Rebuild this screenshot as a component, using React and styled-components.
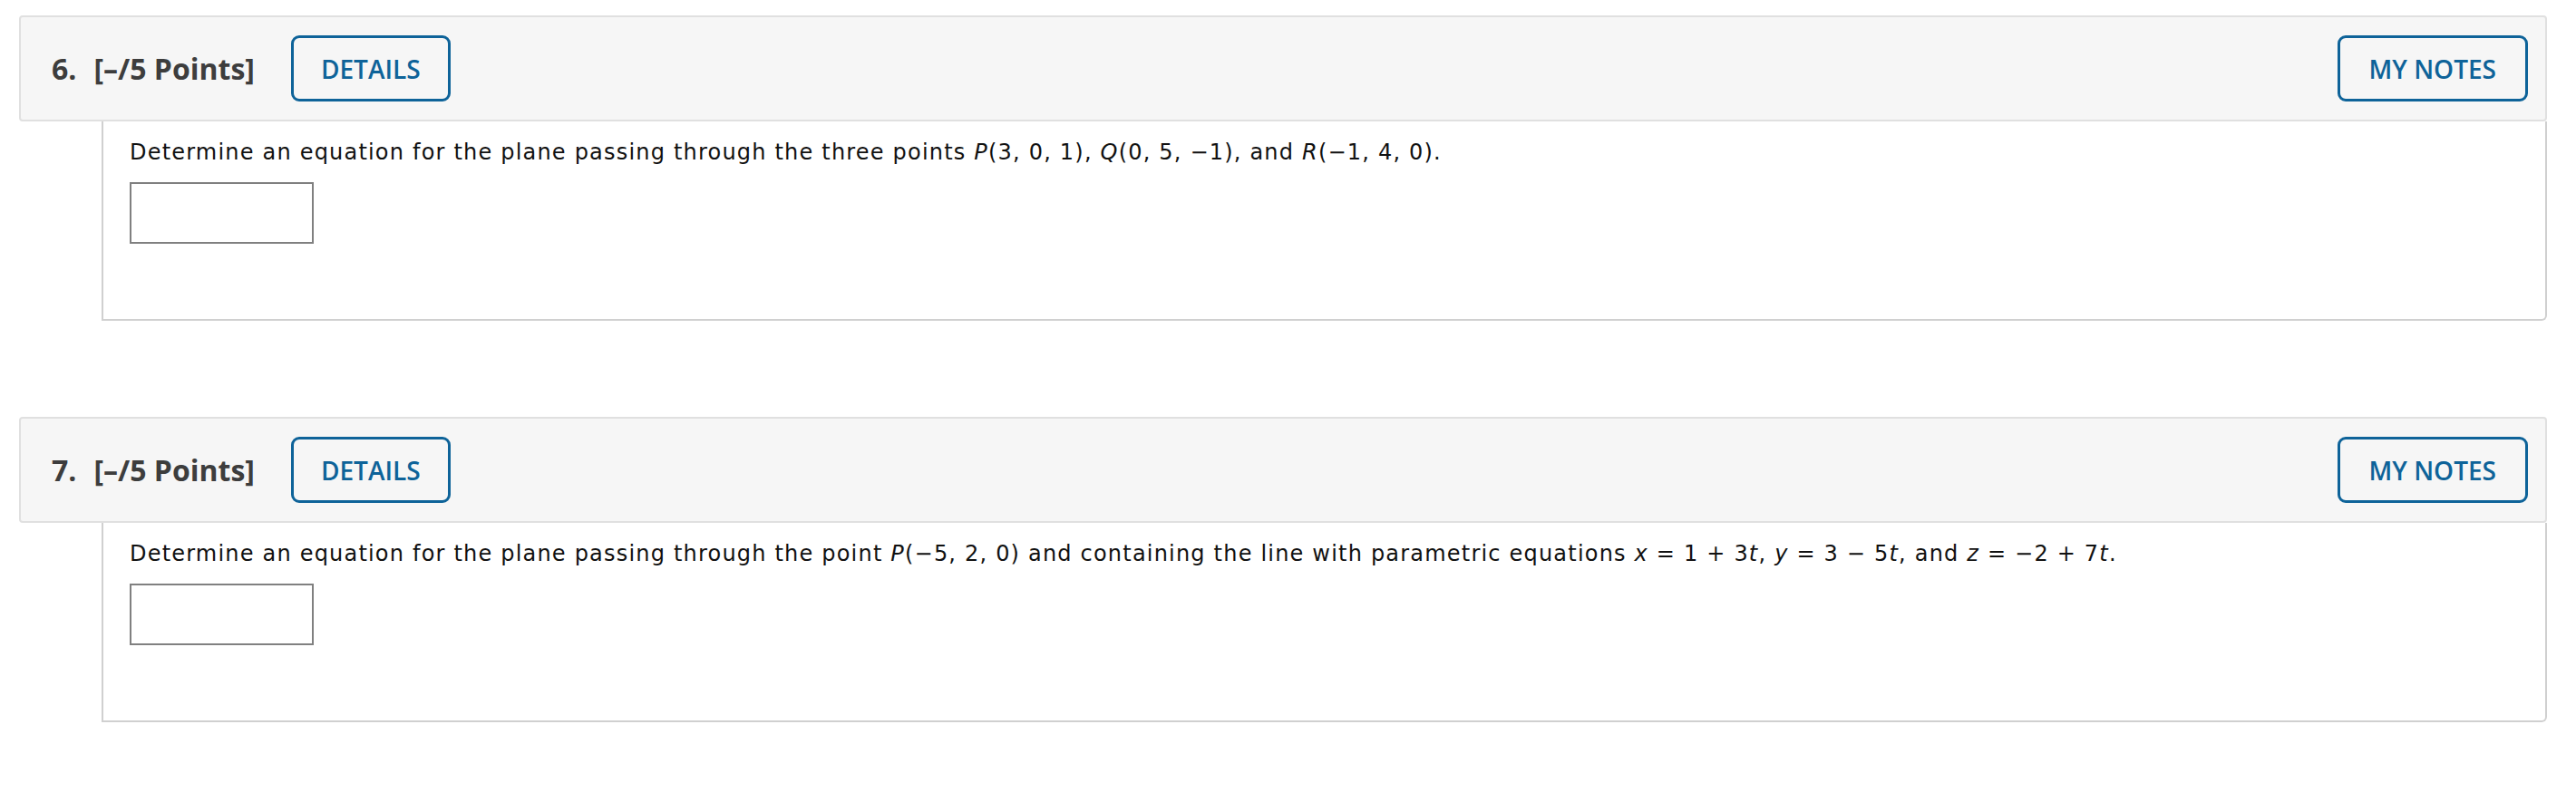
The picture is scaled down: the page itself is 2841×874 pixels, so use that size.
import React from 'react'
import styled, { createGlobalStyle } from 'styled-components'

const GlobalStyle = createGlobalStyle`
  html, body {
    margin: 0;
    padding: 0;
    background: #ffffff;
  }
`

const Page = styled.div`
  padding: 17px 32px 40px 21px;
  display: flex;
  flex-direction: column;
  gap: 106px;
`

const Question = styled.section`
  display: flex;
  flex-direction: column;
`

const Header = styled.div`
  box-sizing: border-box;
  height: 117px;
  display: flex;
  align-items: center;
  padding: 0 19px 0 34px;
  background: #f6f6f6;
  border: 2px solid #e0e0e0;
  border-radius: 4px;
`

const Title = styled.h3`
  margin: 0;
  font-family: "Open Sans", sans-serif;
  font-weight: 700;
  font-size: 32px;
  color: #3d3d3d;
  display: flex;
  align-items: baseline;
`

const Num = styled.span`
  margin-right: 19px;
`

const OutlineButton = styled.button`
  box-sizing: border-box;
  height: 73px;
  padding: 0 ${p => p.$push ? 32 : 30}px;
  margin-left: ${p => p.$push ? 'auto' : '40px'};
  background: transparent;
  border: 3px solid #0e6399;
  border-radius: 9px;
  color: #0e6399;
  font-family: "Open Sans", sans-serif;
  font-weight: 600;
  font-size: 28px;
  cursor: pointer;
`

const Body = styled.div`
  margin-left: 91px;
  padding: 18px 29px 83px;
  border: 2px solid #d0d0d0;
  border-top: none;
  border-radius: 0 0 6px 0;
`

const Prompt = styled.p`
  margin: 0 0 17px;
  font-family: "DejaVu Sans", Verdana, sans-serif;
  font-size: 24px;
  letter-spacing: 1.2px;
  line-height: 32px;
  color: #111;
`

const Answer = styled.input`
  display: block;
  box-sizing: border-box;
  width: 203px;
  height: 68px;
  border: 2px solid #808080;
  background: #fff;
`

const questions = [
  {
    n: 6,
    text: (
      <>
        Determine an equation for the plane passing through the three points <i>P</i>(3, 0, 1), <i>Q</i>(0, 5, −1), and <i>R</i>(−1, 4, 0).
      </>
    ),
  },
  {
    n: 7,
    text: (
      <>
        Determine an equation for the plane passing through the point <i>P</i>(−5, 2, 0) and containing the line with parametric equations <i>x</i> = 1 + 3<i>t</i>, <i>y</i> = 3 − 5<i>t</i>, and <i>z</i> = −2 + 7<i>t</i>.
      </>
    ),
  },
]

export default function App() {
  return (
    <>
      <GlobalStyle />
      <Page>
        {questions.map(q => (
          <Question key={q.n}>
            <Header>
              <Title>
                <Num>{q.n}.</Num>[–/5 Points]
              </Title>
              <OutlineButton>DETAILS</OutlineButton>
              <OutlineButton $push>MY NOTES</OutlineButton>
            </Header>
            <Body>
              <Prompt>{q.text}</Prompt>
              <Answer type="text" />
            </Body>
          </Question>
        ))}
      </Page>
    </>
  )
}
